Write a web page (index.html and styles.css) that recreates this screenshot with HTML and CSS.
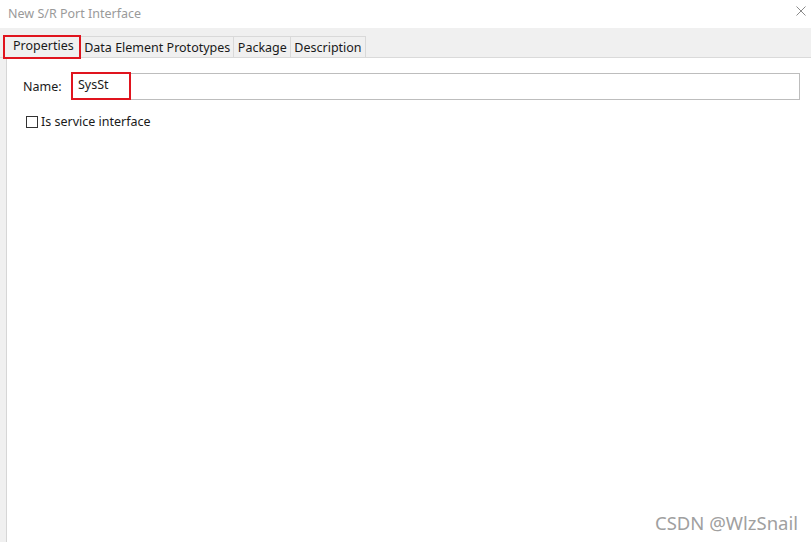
FILE: index.html
```html
<!DOCTYPE html>
<html>
<head>
<meta charset="utf-8">
<link rel="stylesheet" href="styles.css">
</head>
<body>
<div class="window">
  <div class="titlebar">
    <span class="title">New S/R Port Interface</span>
    <svg class="close" width="10" height="10" viewBox="0 0 10 10"><path d="M0.5 0.5 L9.5 9.5 M9.5 0.5 L0.5 9.5" stroke="#8a8a8a" stroke-width="1"/></svg>
  </div>
  <div class="tabbar">
    <div class="tab active"><span>Properties</span></div>
    <div class="tab"><span>Data Element Prototypes</span></div>
    <div class="tab"><span>Package</span></div>
    <div class="tab"><span>Description</span></div>
  </div>
  <div class="body">
    <div class="panel">
      <div class="row">
        <span class="label">Name:</span>
        <div class="input"><span class="value">SysSt</span><span class="hl"></span></div>
      </div>
      <label class="check"><span class="box"></span><span>Is service interface</span></label>
      <div class="watermark">CSDN @WlzSnail</div>
    </div>
  </div>
</div>
</body>
</html>
```
FILE: styles.css
```css
html, body { margin: 0; padding: 0; }
body { width: 811px; height: 542px; overflow: hidden; background: #fff; font-family: "Noto Sans", "Open Sans", sans-serif; font-size: 12.5px; color: #1a1a1a; }
.window { display: flex; flex-direction: column; height: 542px; }
.titlebar { height: 28px; display: flex; align-items: center; justify-content: space-between; padding: 0 5px 2px 8px; box-sizing: border-box; }
.title { color: #9a9a9a; font-size: 12.5px; }
.close { margin-top: -4px; }
.tabbar { height: 30px; background: #f0f0f0; display: flex; align-items: flex-end; padding-left: 4px; border-bottom: 1px solid #dadada; box-sizing: border-box; }
.tab { height: 21px; display: flex; align-items: center; padding: 0 3px 0 3.5px; border: 1px solid #d9d9d9; border-bottom: none; margin-left: -1px; background: #f0f0f0; box-sizing: border-box; }
.tab span { margin-top: 1px; }
.tab.active { height: 24px; background: #f0f0f0; border: 2px solid #e0141e; margin-left: -1px; margin-bottom: -2px; padding: 0 5px 0 8px; position: relative; z-index: 1; }
.tab.active span { margin-top: -3px; }
.body { flex: 1; display: flex; background: #f0f0f0; padding-left: 6px; }
.panel { flex: 1; background: #fff; border-left: 1px solid #d6d6d6; position: relative; padding: 15px 11px 0 16px; }
.row { display: flex; align-items: center; height: 27px; }
.label { width: 48px; }
.input { flex: 1; height: 27px; border: 1px solid #bdbdbd; box-sizing: border-box; position: relative; display: flex; align-items: center; padding-left: 6px; }
.value { font-size: 12.5px; margin-top: -4px; }
.hl { position: absolute; left: -1px; top: -2px; width: 60px; height: 28px; border: 2px solid #e0141e; box-sizing: border-box; }
.check { display: flex; align-items: center; margin-top: 13px; margin-left: 3px; }
.box { width: 12px; height: 12px; border: 1px solid #333; margin-right: 3px; box-sizing: border-box; }
.watermark { position: absolute; right: 13px; bottom: 7px; color: #a0a0a0; font-size: 18.5px; }
```
